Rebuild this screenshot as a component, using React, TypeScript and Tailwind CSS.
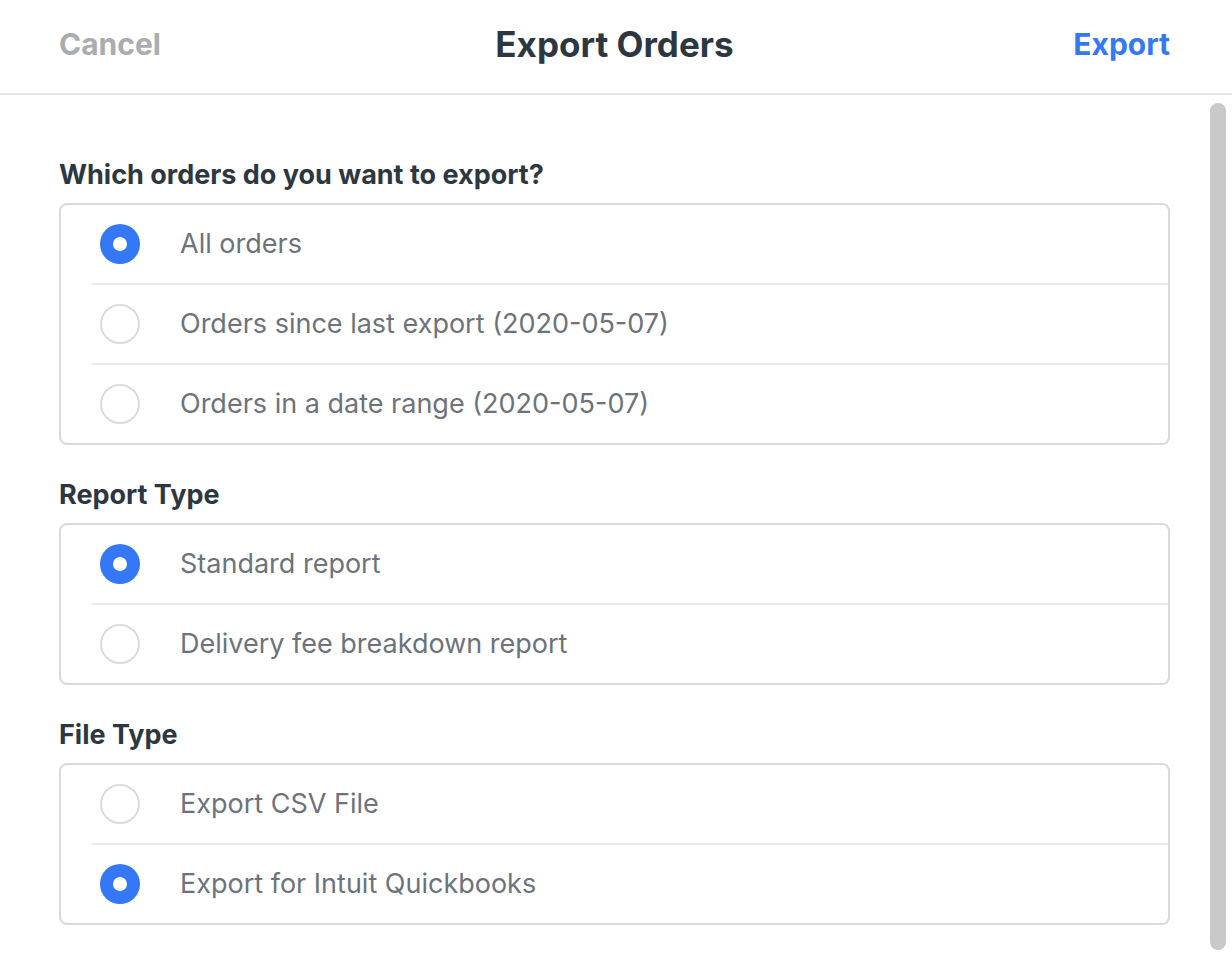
import { useState } from "react";

const sections = [
  {
    title: "Which orders do you want to export?",
    options: [
      "All orders",
      "Orders since last export (2020-05-07)",
      "Orders in a date range (2020-05-07)",
    ],
    selected: 0,
  },
  {
    title: "Report Type",
    options: ["Standard report", "Delivery fee breakdown report"],
    selected: 0,
  },
  {
    title: "File Type",
    options: ["Export CSV File", "Export for Intuit Quickbooks"],
    selected: 1,
  },
];

const Radio = ({ checked }: { checked: boolean }) =>
  checked ? (
    <span className="flex h-10 w-10 shrink-0 items-center justify-center rounded-full bg-[#3478f6]">
      <span className="h-[14px] w-[14px] rounded-full bg-white" />
    </span>
  ) : (
    <span className="h-10 w-10 shrink-0 rounded-full border-2 border-[#d9dbdd] bg-white" />
  );

const Section = ({
  title,
  options,
  selected,
}: {
  title: string;
  options: string[];
  selected: number;
}) => {
  const [value, setValue] = useState(selected);
  return (
    <div>
      <h2 className="h-[60px] pt-[4px] text-[27px] font-bold leading-[56px] text-[#2c3740]">
        {title}
      </h2>
      <div className="rounded-[8px] border-2 border-[#d7dbde] bg-white">
        {options.map((opt, i) => (
          <div key={opt} className={i > 0 ? "ml-[31px] border-t-2 border-[#e8eaec]" : "ml-[31px]"}>
            <button
              type="button"
              onClick={() => setValue(i)}
              className="flex h-[78px] w-full items-center pl-[8px] text-left"
            >
              <Radio checked={value === i} />
              <span className="ml-[40px] text-[27px] text-[#6c737a]">{opt}</span>
            </button>
          </div>
        ))}
      </div>
    </div>
  );
};

export default function App() {
  return (
    <div
      className="flex h-[964px] w-[1232px] flex-col overflow-hidden bg-white"
      style={{ fontFamily: "Inter, 'Noto Sans', sans-serif" }}
    >
      {/* Header */}
      <div className="flex h-[95px] shrink-0 items-center justify-between border-b-2 border-[#e5e5e5] pb-[5px] pl-[59px] pr-[62px]">
        <button type="button" className="w-[170px] text-left text-[30px] font-bold text-[#a9adb2]">
          Cancel
        </button>
        <h1 className="text-[35px] font-bold text-[#2c3740]">Export Orders</h1>
        <button type="button" className="w-[170px] text-right text-[30px] font-bold text-[#3478f6]">
          Export
        </button>
      </div>

      {/* Body */}
      <div className="flex min-h-0 flex-1">
        <div className="flex flex-1 flex-col gap-[18px] pl-[59px] pr-[40px] pt-[48px]">
          {sections.map((s) => (
            <Section key={s.title} {...s} />
          ))}
        </div>
        <div className="mb-[14px] mr-[6px] mt-[8px] w-[16px] rounded-full bg-[#c9c9cb]" />
      </div>
    </div>
  );
}
